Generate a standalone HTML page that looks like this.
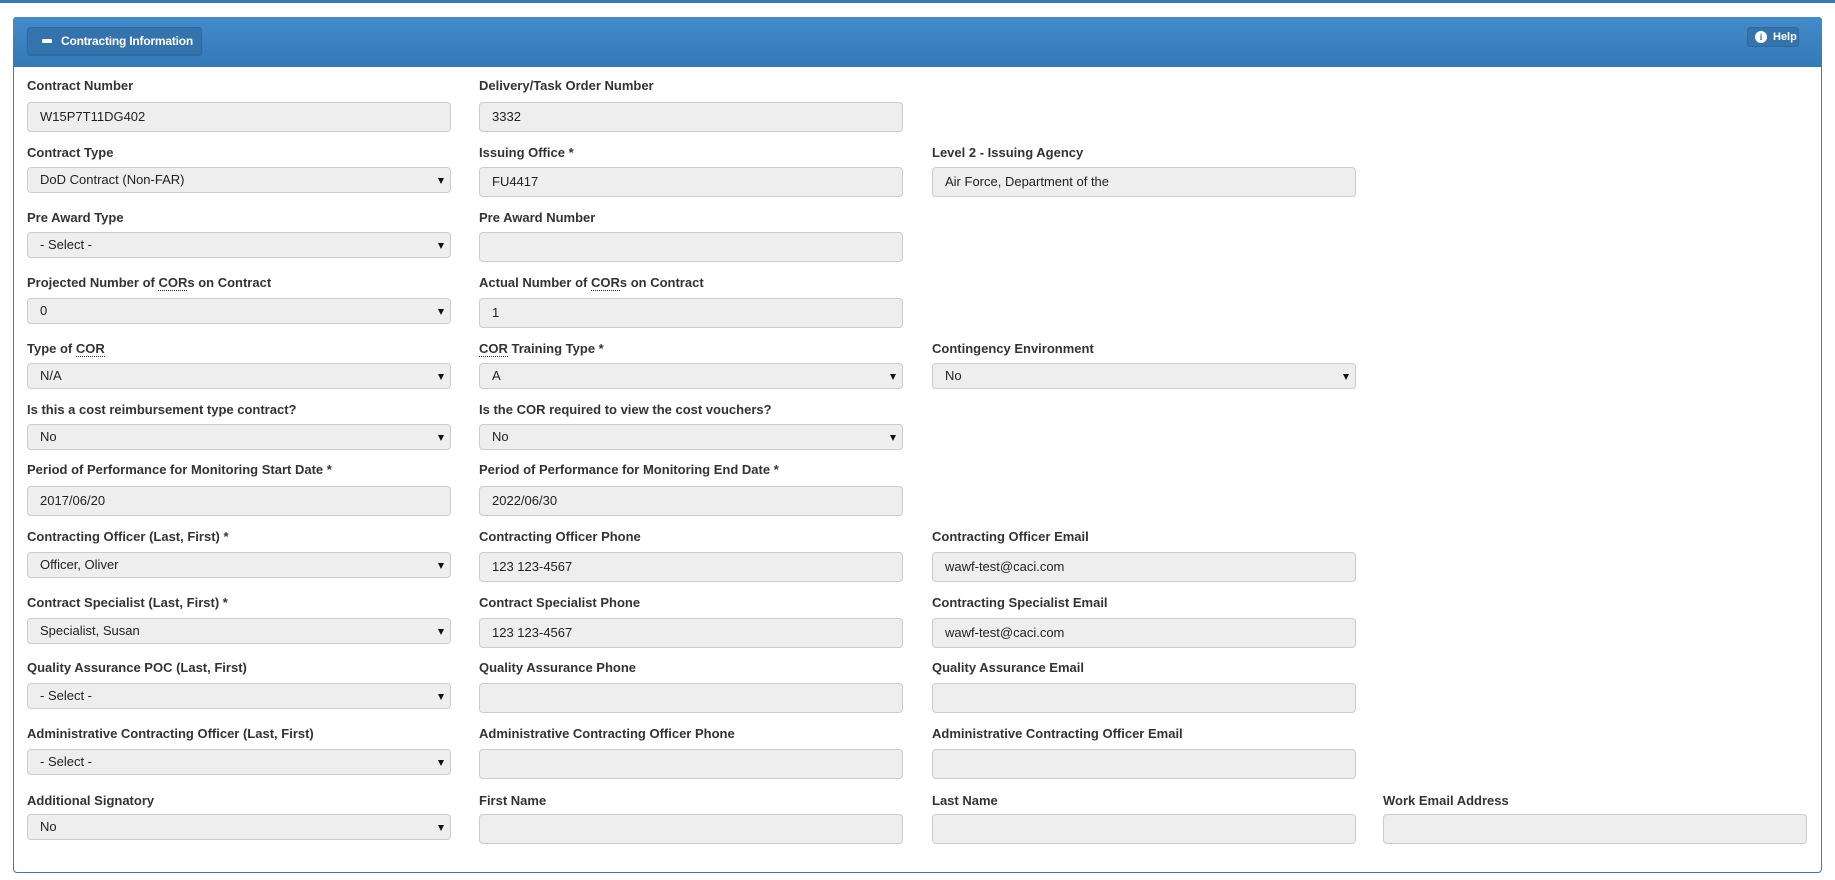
<!DOCTYPE html>
<html><head><meta charset="utf-8"><style>
*{box-sizing:border-box}
body{margin:0;width:1835px;height:880px;background:#fff;font-family:"Liberation Sans",Arial,sans-serif;position:relative;overflow:hidden}
.top{position:absolute;left:0;top:0;width:1835px;height:3px;background:#337ab7}
.panel{position:absolute;left:13px;top:17px;width:1809px;height:856px;border:1px solid #337ab7;border-radius:4px}
.hdr{position:absolute;left:13px;top:17px;width:1809px;height:50px;background:linear-gradient(#438bca,#3479b8);border-radius:3px 3px 0 0}
.btn{position:absolute;left:27px;top:27px;width:175px;height:28px;background:#3573ad;border:1px solid #2e6aa2;border-radius:3px;color:#fff;font-size:12px;font-weight:bold;line-height:26px;box-shadow:0 1px 1px rgba(0,0,0,.15)}
.btn .m{position:absolute;left:14px;top:11px;width:10px;height:4px;background:#fff;border-radius:1px}
.btn span.t{position:absolute;left:33px;top:0;letter-spacing:-0.2px}
.help{position:absolute;left:1747px;top:27px;width:52px;height:20px;background:#3573ad;border:1px solid #2e6aa2;border-radius:3px;color:#fff;font-size:11px;font-weight:bold;line-height:18px}
.help .i{position:absolute;left:7px;top:3px;width:12px;height:12px;border-radius:50%;background:#fff;color:#3573ad;font-size:9px;font-weight:bold;line-height:12px;text-align:center;font-family:"Liberation Serif",serif}
.help span.t{position:absolute;left:25px;top:0}
.l{position:absolute;font-size:13px;font-weight:bold;color:#333;line-height:16px;white-space:nowrap}
.f{position:absolute;width:424px;background:#eee;border:1px solid #ccc;border-radius:4px;font-size:13px;color:#222;padding-left:12px;white-space:nowrap}
.in{height:30px;line-height:28px}
.se{height:26px;line-height:24px}
.se:after{content:"";position:absolute;right:6px;top:10px;border-left:3px solid transparent;border-right:3px solid transparent;border-top:6px solid #111}
abbr{text-decoration:none;border-bottom:1px dotted #333}
</style></head><body>
<div class="top"></div>
<div class="panel"></div>
<div class="hdr"></div>
<div class="btn"><div class="m"></div><span class="t">Contracting Information</span></div>
<div class="help"><div class="i">i</div><span class="t">Help</span></div>

<div class="l" style="left:27px;top:78px">Contract Number</div>
<div class="f in" style="left:27px;top:102px">W15P7T11DG402</div>
<div class="l" style="left:479px;top:78px">Delivery/Task Order Number</div>
<div class="f in" style="left:479px;top:102px">3332</div>

<div class="l" style="left:27px;top:145px">Contract Type</div>
<div class="f se" style="left:27px;top:167px">DoD Contract (Non-FAR)</div>
<div class="l" style="left:479px;top:145px">Issuing Office *</div>
<div class="f in" style="left:479px;top:167px">FU4417</div>
<div class="l" style="left:932px;top:145px">Level 2 - Issuing Agency</div>
<div class="f in" style="left:932px;top:167px">Air Force, Department of the</div>

<div class="l" style="left:27px;top:210px">Pre Award Type</div>
<div class="f se" style="left:27px;top:232px">- Select -</div>
<div class="l" style="left:479px;top:210px">Pre Award Number</div>
<div class="f in" style="left:479px;top:232px"></div>

<div class="l" style="left:27px;top:275px">Projected Number of <abbr>COR</abbr>s on Contract</div>
<div class="f se" style="left:27px;top:298px">0</div>
<div class="l" style="left:479px;top:275px">Actual Number of <abbr>COR</abbr>s on Contract</div>
<div class="f in" style="left:479px;top:298px">1</div>

<div class="l" style="left:27px;top:341px">Type of <abbr>COR</abbr></div>
<div class="f se" style="left:27px;top:363px">N/A</div>
<div class="l" style="left:479px;top:341px"><abbr>COR</abbr> Training Type *</div>
<div class="f se" style="left:479px;top:363px">A</div>
<div class="l" style="left:932px;top:341px">Contingency Environment</div>
<div class="f se" style="left:932px;top:363px">No</div>

<div class="l" style="left:27px;top:402px">Is this a cost reimbursement type contract?</div>
<div class="f se" style="left:27px;top:424px">No</div>
<div class="l" style="left:479px;top:402px">Is the COR required to view the cost vouchers?</div>
<div class="f se" style="left:479px;top:424px">No</div>

<div class="l" style="left:27px;top:462px">Period of Performance for Monitoring Start Date *</div>
<div class="f in" style="left:27px;top:486px">2017/06/20</div>
<div class="l" style="left:479px;top:462px">Period of Performance for Monitoring End Date *</div>
<div class="f in" style="left:479px;top:486px">2022/06/30</div>

<div class="l" style="left:27px;top:529px">Contracting Officer (Last, First) *</div>
<div class="f se" style="left:27px;top:552px">Officer, Oliver</div>
<div class="l" style="left:479px;top:529px">Contracting Officer Phone</div>
<div class="f in" style="left:479px;top:552px">123 123-4567</div>
<div class="l" style="left:932px;top:529px">Contracting Officer Email</div>
<div class="f in" style="left:932px;top:552px">wawf-test@caci.com</div>

<div class="l" style="left:27px;top:595px">Contract Specialist (Last, First) *</div>
<div class="f se" style="left:27px;top:618px">Specialist, Susan</div>
<div class="l" style="left:479px;top:595px">Contract Specialist Phone</div>
<div class="f in" style="left:479px;top:618px">123 123-4567</div>
<div class="l" style="left:932px;top:595px">Contracting Specialist Email</div>
<div class="f in" style="left:932px;top:618px">wawf-test@caci.com</div>

<div class="l" style="left:27px;top:660px">Quality Assurance POC (Last, First)</div>
<div class="f se" style="left:27px;top:683px">- Select -</div>
<div class="l" style="left:479px;top:660px">Quality Assurance Phone</div>
<div class="f in" style="left:479px;top:683px"></div>
<div class="l" style="left:932px;top:660px">Quality Assurance Email</div>
<div class="f in" style="left:932px;top:683px"></div>

<div class="l" style="left:27px;top:726px">Administrative Contracting Officer (Last, First)</div>
<div class="f se" style="left:27px;top:749px">- Select -</div>
<div class="l" style="left:479px;top:726px">Administrative Contracting Officer Phone</div>
<div class="f in" style="left:479px;top:749px"></div>
<div class="l" style="left:932px;top:726px">Administrative Contracting Officer Email</div>
<div class="f in" style="left:932px;top:749px"></div>

<div class="l" style="left:27px;top:793px">Additional Signatory</div>
<div class="f se" style="left:27px;top:814px">No</div>
<div class="l" style="left:479px;top:793px">First Name</div>
<div class="f in" style="left:479px;top:814px"></div>
<div class="l" style="left:932px;top:793px">Last Name</div>
<div class="f in" style="left:932px;top:814px"></div>
<div class="l" style="left:1383px;top:793px">Work Email Address</div>
<div class="f in" style="left:1383px;top:814px"></div>
</body></html>
